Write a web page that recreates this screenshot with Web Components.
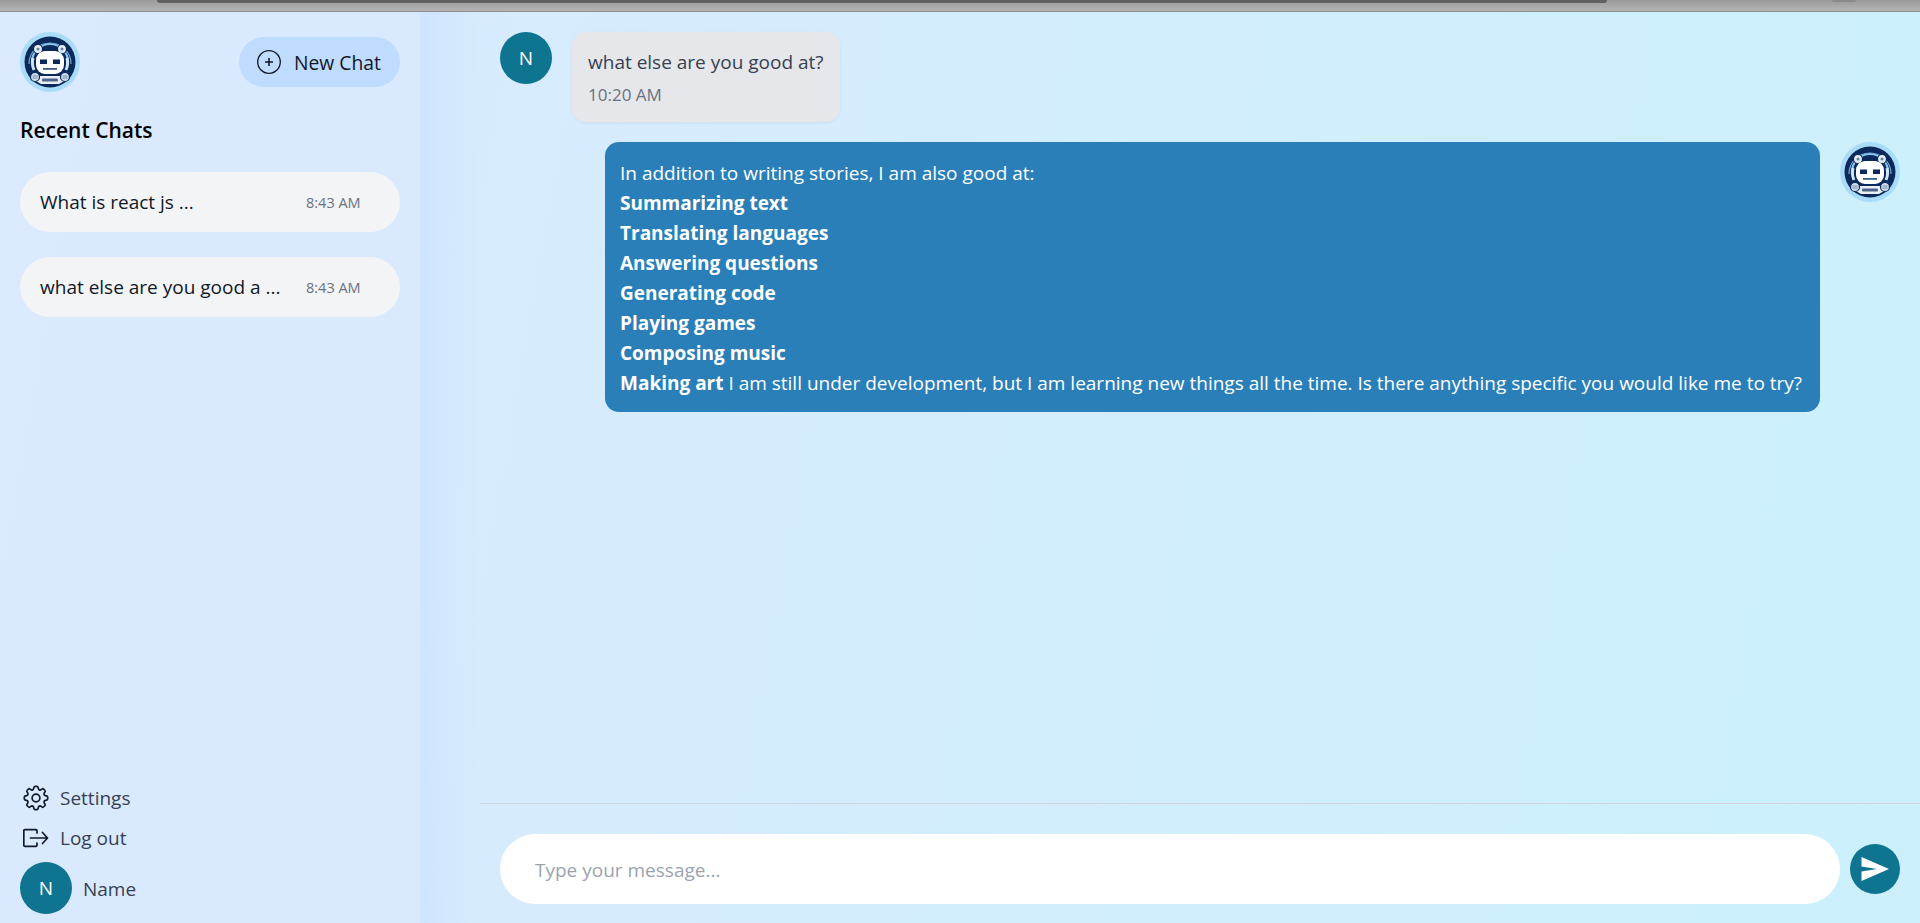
<!DOCTYPE html>
<html><head><meta charset="utf-8">
<style>
html,body{margin:0;padding:0;height:100%;overflow:hidden}
body{font-family:"Open Sans","Noto Sans",sans-serif;background:linear-gradient(100deg,#dbeafe,#cbf0fc)}
</style></head><body>
<template id="logo-t"><style>:host{display:block;width:60px;height:60px;flex:none}svg{display:block;width:100%;height:100%}</style>
<svg viewBox="0 0 60 60"><circle cx="30" cy="30" r="30" fill="#a9dcf8"/><circle cx="30" cy="30" r="25.500" fill="#0b2a5b"/>
<path d="M12 30a18 18 0 0 1 36 0" fill="none" stroke="#8fc4ea" stroke-width="2"/><path d="M9 32a21 21 0 0 1 42 0" fill="none" stroke="#6fa9d8" stroke-width="1.2"/><path d="M14 38a18 18 0 0 1-1-12M46 38a18 18 0 0 0 1-12" fill="none" stroke="#cfe6f8" stroke-width="3"/>
<circle cx="18" cy="17" r="4.500" fill="#e6eef7" stroke="#0b2a5b" stroke-width="1.2"/><circle cx="42" cy="17" r="4.500" fill="#e6eef7" stroke="#0b2a5b" stroke-width="1.2"/><circle cx="18" cy="17" r="1.500" fill="#5d7fa6"/><circle cx="42" cy="17" r="1.500" fill="#5d7fa6"/>
<rect x="16" y="19" width="28" height="23" rx="9" fill="#fff"/><rect x="20" y="27.500" width="7" height="4.500" fill="#0b2a5b"/><rect x="33" y="27.500" width="7" height="4.500" fill="#0b2a5b"/><rect x="23" y="36" width="14" height="1.800" fill="#3b5a85"/>
<path d="M19 44h22l3 5-5 3H21l-5-3z" fill="#e8eff7"/><rect x="22" y="46.500" width="16" height="3" rx="1" fill="#0b2a5b" opacity=".7"/><circle cx="15" cy="45" r="4.500" fill="#cfdcea" stroke="#0b2a5b" stroke-width="1.2"/><circle cx="45" cy="45" r="4.500" fill="#cfdcea" stroke="#0b2a5b" stroke-width="1.2"/><path d="M12.500 44h5M12.500 46h5M42.500 44h5M42.500 46h5" stroke="#5d7fa6" stroke-width=".8"/></svg></template>

<template id="av-t"><style>:host{display:flex;flex:none;width:52px;height:52px;border-radius:50%;background:#0e7490;color:#fff;align-items:center;justify-content:center;font-size:19px}</style><slot></slot></template>

<template id="new-t"><style>:host{display:flex;align-items:center;gap:13px;width:161px;height:50px;box-sizing:border-box;padding-left:18px;border-radius:25px;background:#bfdbfe;color:#111827;font-size:19.3px;margin-top:5px;white-space:nowrap}svg{width:24px;height:24px;flex:none}</style>
<svg viewBox="0 0 24 24" fill="none" stroke="#111827" stroke-width="1.3"><circle cx="12" cy="12" r="11.3"/><path d="M12 8v8M8 12h8" stroke-width="1.6"/></svg><slot></slot></template>

<template id="item-t"><style>:host{display:flex;align-items:center;height:60px;border-radius:30px;background:#f3f4f6;padding:0 40px 0 20px;color:#111827;font-size:19px;justify-content:space-between;white-space:nowrap}.t{font-size:14.5px;color:#6b7280;width:54px;white-space:nowrap}</style><span><slot></slot></span><span class="t"><slot name="time"></slot></span></template>

<template id="side-t"><style>
:host{display:flex;flex-direction:column;width:420px;flex:none;box-sizing:border-box;padding:20px 20px 9px;background:linear-gradient(100deg,#dbeafe,#d8e9fe);position:relative}
.top{display:flex;justify-content:space-between;align-items:flex-start}
h2{margin:24px 0 28px 0;font-size:21px;line-height:28px;font-weight:600;color:#000}
.list{display:flex;flex-direction:column;gap:25px}
.sp{flex:1}
.nav{display:flex;align-items:center;gap:11px;height:40px;padding-left:3px;font-size:19px;color:#374151}
.nav svg{width:26px;height:26px;flex:none}
.me{display:flex;align-items:center;gap:11px;font-size:19px;color:#374151;margin-top:4px}
.me span{margin-top:2px}
</style>
<div class="top"><x-logo></x-logo><x-new>New Chat</x-new></div>
<h2>Recent Chats</h2>
<div class="list"><x-item>What is react js ...<span slot="time">8:43 AM</span></x-item><x-item>what else are you good a ...<span slot="time">8:43 AM</span></x-item></div>
<div class="sp"></div>
<div class="nav"><svg viewBox="2 2 20 20" fill="none" stroke="#111827" stroke-width="1.3" stroke-linecap="round" stroke-linejoin="round"><path d="M10.343 3.94c.09-.542.56-.94 1.11-.94h1.093c.55 0 1.02.398 1.11.94l.149.894c.07.424.384.764.78.93.398.164.855.142 1.205-.108l.737-.527a1.125 1.125 0 0 1 1.45.12l.773.774c.39.389.44 1.002.12 1.45l-.527.737c-.25.35-.272.806-.107 1.204.165.397.505.71.93.78l.893.15c.543.09.94.559.94 1.109v1.094c0 .55-.397 1.02-.94 1.11l-.894.149c-.424.07-.764.383-.929.78-.165.398-.143.854.107 1.204l.527.738c.32.447.269 1.06-.12 1.45l-.774.773a1.125 1.125 0 0 1-1.449.12l-.738-.527c-.35-.25-.806-.272-1.203-.107-.398.165-.71.505-.781.929l-.149.894c-.09.542-.56.94-1.11.94h-1.094c-.55 0-1.019-.398-1.11-.94l-.148-.894c-.071-.424-.384-.764-.781-.93-.398-.164-.854-.142-1.204.108l-.738.527c-.447.32-1.06.269-1.45-.12l-.773-.774a1.125 1.125 0 0 1-.12-1.45l.527-.737c.25-.35.272-.806.108-1.204-.165-.397-.506-.71-.93-.78l-.894-.15c-.542-.09-.94-.56-.94-1.109v-1.094c0-.55.398-1.02.94-1.11l.894-.149c.424-.07.765-.383.93-.78.165-.398.143-.854-.108-1.204l-.526-.738a1.125 1.125 0 0 1 .12-1.45l.773-.773a1.125 1.125 0 0 1 1.45-.12l.737.527c.35.25.807.272 1.204.107.397-.165.71-.505.78-.929z"/><circle cx="12" cy="12" r="3"/></svg><span>Settings</span></div>
<div class="nav"><svg viewBox="0 0 26 26" fill="none" stroke="#111827" stroke-width="1.7" stroke-linecap="round" stroke-linejoin="round"><path d="M14 8V5.800c0-.7-.5-1.200-1.200-1.200H2c-.7 0-1.200.5-1.200 1.200v14.400c0 .7.5 1.200 1.200 1.200h10.800c.7 0 1.200-.5 1.200-1.200V18M7.500 13H24.500M19.500 7.500 24.500 13l-5 5.500"/></svg><span>Log out</span></div>
<div class="me"><x-av>N</x-av><span>Name</span></div></template>

<template id="u-t"><style>:host{display:flex;gap:20px;align-items:flex-start}.b{background:#e5e7eb;border-radius:14px;padding:16px 16px 0;height:90px;box-sizing:border-box;box-shadow:0 1px 3px rgba(0,0,0,.06);color:#374151;font-size:19px;line-height:28px;white-space:nowrap}.t{font-size:17px;line-height:24px;margin-top:7px;color:#6b7280}</style><x-av>N</x-av><div class="b"><slot></slot><div class="t"><slot name="time"></slot></div></div></template>

<template id="b-t"><style>:host{display:flex;gap:20px;align-items:flex-start;justify-content:flex-end}.b{width:1215px;box-sizing:border-box;background:#2a7fb8;border-radius:14px;padding:16px 15px 14px;color:#fff;font-size:19px;line-height:30px;white-space:nowrap}</style><div class="b"><slot></slot></div><x-logo></x-logo></template>

<template id="input-t"><style>:host{display:flex;gap:10px;align-items:center;border-top:1px solid #d1d5db;padding:30px 20px 19px;height:120px;box-sizing:border-box}.i{flex:1;height:70px;border-radius:35px;background:#fff;display:flex;align-items:center;padding-left:35px;color:#9ca3af;font-size:19px;box-sizing:border-box;padding-top:2px}.s{flex:none;width:50px;height:50px;border-radius:50%;background:#0e7490;display:flex;align-items:center;justify-content:center}svg{width:30px;height:26px}</style><div class="i"><slot></slot></div><div class="s"><svg viewBox="0 0 30 26"><path d="M1.500 1 29 13 1.500 25V15.500L17 13 1.500 10.500z" fill="#fff"/></svg></div></template>

<template id="chat-t"><style>:host{display:flex;flex-direction:column;flex:1;min-width:0;padding-left:60px;background:linear-gradient(90deg,rgba(191,219,254,.38),rgba(191,219,254,0)) left top/60px 100% no-repeat}.m{flex:1;display:flex;flex-direction:column;gap:20px;padding:20px 20px 0 20px}</style><div class="m"><slot></slot></div><x-input>Type your message...</x-input></template>

<template id="bar-t"><style>:host{display:block;height:12px;flex:none;box-sizing:border-box;background:linear-gradient(#9a9a9a,#b4b4b4);border-bottom:1px solid #8d8d8d;position:relative}.u{position:absolute;left:157px;width:1450px;top:0;height:3px;background:#606060;border-radius:0 0 8px 8px}.c{position:absolute;left:1832px;width:24px;top:0;height:2px;background:#8a8a8a;border-radius:0 0 8px 8px}</style><div class="u"></div><div class="c"></div></template>

<template id="app-t"><style>:host{display:flex;flex-direction:column;height:923px;width:1920px}.r{flex:1;display:flex;min-height:0}</style><x-bar></x-bar><div class="r"><x-side></x-side><x-chat><slot></slot></x-chat></div></template>

<x-app>
<x-u>what else are you good at?<span slot="time">10:20 AM</span></x-u>
<x-b>In addition to writing stories, I am also good at:<br><b>Summarizing text</b><br><b>Translating languages</b><br><b>Answering questions</b><br><b>Generating code</b><br><b>Playing games</b><br><b>Composing music</b><br><b>Making art</b> I am still under development, but I am learning new things all the time. Is there anything specific you would like me to try?</x-b>
</x-app>
<script>
const reg=(n,t)=>customElements.define(n,class extends HTMLElement{constructor(){super();this.attachShadow({mode:'open'}).appendChild(document.getElementById(t).content.cloneNode(true))}});
[['x-logo','logo-t'],['x-av','av-t'],['x-new','new-t'],['x-item','item-t'],['x-side','side-t'],['x-u','u-t'],['x-b','b-t'],['x-input','input-t'],['x-chat','chat-t'],['x-bar','bar-t'],['x-app','app-t']].forEach(a=>reg(a[0],a[1]));
</script>
</body></html>
